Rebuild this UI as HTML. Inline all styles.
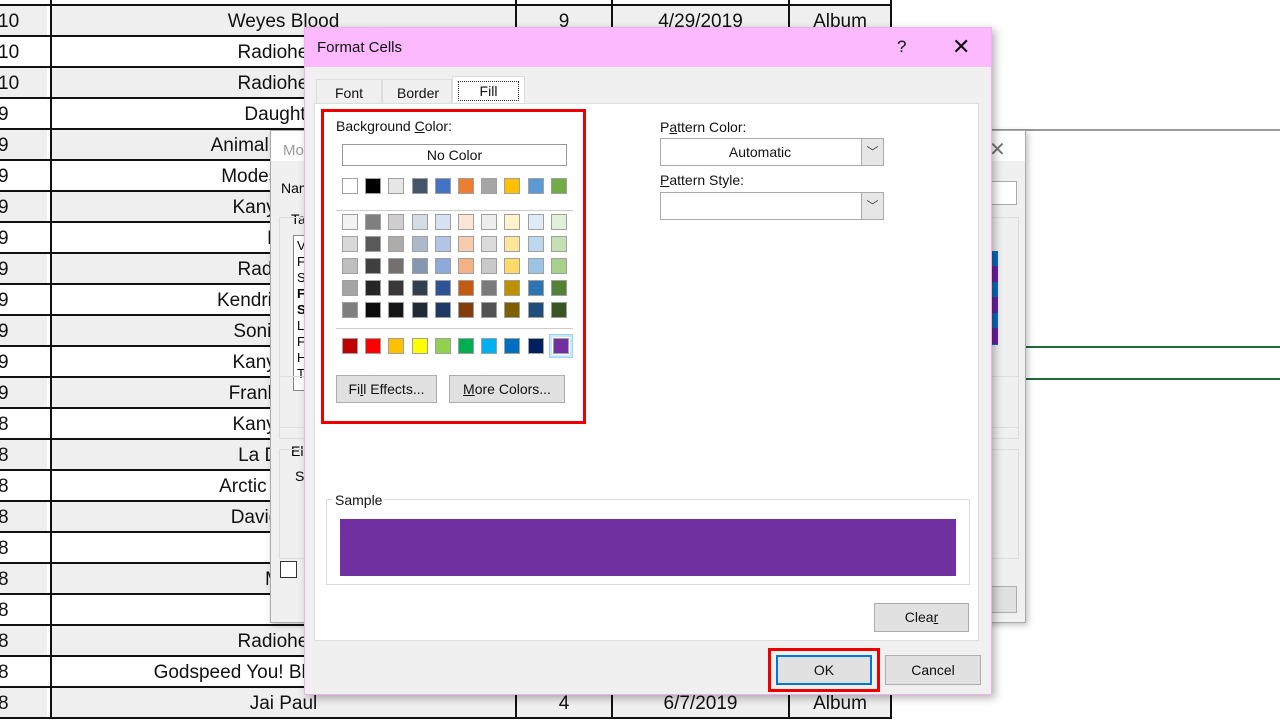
<!DOCTYPE html>
<html><head><meta charset="utf-8"><style>
*{margin:0;padding:0;box-sizing:border-box}
body{width:1280px;height:720px;overflow:hidden;background:#fff;position:relative;font-family:"Liberation Sans",sans-serif}
.a{position:absolute}
.row{position:absolute;left:0;width:892px;height:31px;border-bottom:2px solid #111;font-size:19px;color:#111}
.row div{position:absolute;top:0;height:29px;line-height:31px;text-align:center}
.c0{left:0;width:49px;text-align:left!important;left:-2px!important}
.c1{left:50px;width:465px;border-left:2px solid #111}
.c2{left:515px;width:96px;border-left:2px solid #111}
.c3{left:611px;width:177px;border-left:2px solid #111}
.c4{left:788px;width:104px;border-left:2px solid #111;border-right:2px solid #111}
.g{background:#efefef}
.sw{position:absolute;width:16px;height:16px;border:1px solid #a0a0a0;outline:1px solid #fff}
.t{font-size:14px;color:#111}
.btn{position:absolute;background:#e1e1e1;border:1px solid #adadad;font-size:14px;text-align:center;color:#111}
</style></head><body>
<div class="row" style="top:-25px"><div class="c0"></div><div class="c1"></div><div class="c2"></div><div class="c3"></div><div class="c4"></div></div>
<div id="rows"></div>
<div class="a" style="left:892px;top:129px;width:388px;height:2px;background:#999"></div>
<div class="a" style="left:1025px;top:346px;width:255px;height:2px;background:#1e6b3e"></div>
<div class="a" style="left:1025px;top:378px;width:255px;height:2px;background:#1e6b3e"></div>

<!-- back dialog -->
<div class="a" style="left:270px;top:130px;width:756px;height:493px;background:#f0f0f0;border:1px solid #aaa;box-shadow:2px 2px 6px rgba(0,0,0,.25)">
 <div class="a" style="left:0;top:0;width:754px;height:30px;background:#fff"></div>
 <div class="a" style="left:12px;top:11px;font-size:15px;color:#999">Mo</div>
 <div class="a" style="left:718px;top:6px;font-size:20px;color:#777">✕</div>
 <div class="a" style="left:10px;top:49px;font-size:14px">Nam</div>
 <div class="a" style="left:20px;top:80px;font-size:14px">Ta</div>
 <div class="a" style="left:8px;top:86px;width:740px;height:222px;border:1px solid #ddd"></div>
 <div class="a" style="left:22px;top:104px;width:100px;height:156px;border:1px solid #888;background:#fff;font-size:13px;line-height:16px;padding:2px 3px">V<br>F<br>S<br><b>F</b><br><b>S</b><br>L<br>F<br>H<br>T</div>
 <div class="a" style="left:700px;top:50px;width:46px;height:24px;background:#fff;border:1px solid #aaa"></div>
 <div class="a" style="left:700px;top:120px;width:27px;height:94px;background:repeating-linear-gradient(#0b6cb8 0 15px,#6a22a0 15px 31px)"></div>
 <div class="a" style="left:8px;top:245px;width:740px;height:52px;border:1px solid #ddd"></div>
 <div class="a" style="left:20px;top:312px;font-size:14px">El</div>
 <div class="a" style="left:8px;top:318px;width:740px;height:110px;border:1px solid #ddd"></div>
 <div class="a" style="left:24px;top:337px;font-size:14px">Sl</div>
 <div class="a" style="left:9px;top:430px;width:17px;height:17px;border:1px solid #333;background:#fff"></div>
 <div class="a" style="left:700px;top:455px;width:46px;height:27px;background:#e1e1e1;border:1px solid #adadad"></div>
</div>

<!-- Format Cells -->
<div class="a" style="left:304px;top:27px;width:688px;height:668px;background:#f0f0f0;border:1px solid #f0b0f0;box-shadow:3px 3px 8px rgba(0,0,0,.3)">
 <div class="a" style="left:0;top:0;width:686px;height:39px;background:#fdb9fd"></div>
 <div class="a" style="left:12px;top:11px;font-size:15px;color:#111">Format Cells</div>
 <div class="a" style="left:592px;top:9px;font-size:17px;color:#111">?</div>
 <div class="a" style="left:647px;top:6px;font-size:22px;color:#111">✕</div>
 <!-- tabs -->
 <div class="a" style="left:11px;top:51px;width:66px;height:24px;border:1px solid #ddd;border-bottom:none;background:#f0f0f0"></div>
 <div class="a t" style="left:30px;top:57px">Font</div>
 <div class="a" style="left:77px;top:51px;width:70px;height:24px;border:1px solid #ddd;border-bottom:none;background:#f0f0f0"></div>
 <div class="a t" style="left:92px;top:57px">Border</div>
 <div class="a" style="left:147px;top:48px;width:73px;height:28px;border:1px solid #ddd;border-bottom:none;background:#fff"></div>
 <div class="a t" style="left:153px;top:53px;width:61px;height:20px;border:1px dotted #333;text-align:center;line-height:18px">Fill</div>
 <div class="a" style="left:9px;top:75px;width:665px;height:538px;background:#fff;border:1px solid #ddd"></div>
 <div class="a" style="left:16px;top:81px;width:265px;height:315px;border:3px solid #e00"></div>
 <div class="a t" style="left:31px;top:90px">Background <u>C</u>olor:</div>
 <div class="a t" style="left:37px;top:116px;width:225px;height:22px;border:1px solid #999;text-align:center;line-height:20px">No Color</div>
 <div class="a" style="left:31px;top:182px;width:237px;height:1px;background:#ccc"></div>
 <div class="a" style="left:31px;top:300px;width:237px;height:1px;background:#ccc"></div>
 <div id="sw"></div>
 <div class="btn" style="left:31px;top:347px;width:101px;height:28px;line-height:26px"><span>Fi<u>l</u>l Effects...</span></div>
 <div class="btn" style="left:144px;top:347px;width:116px;height:28px;line-height:26px"><u>M</u>ore Colors...</div>
 <div class="a t" style="left:355px;top:91px">P<u>a</u>ttern Color:</div>
 <div class="a t" style="left:355px;top:110px;width:224px;height:28px;border:1px solid #aaa;line-height:26px;text-align:center;padding-right:24px;background:#fff">Automatic</div>
 <div class="a" style="left:556px;top:111px;width:22px;height:26px;background:#e6e6e6;border-left:1px solid #aaa;text-align:center;font-size:12px;line-height:26px;color:#444">﹀</div>
 <div class="a t" style="left:355px;top:144px"><u>P</u>attern Style:</div>
 <div class="a" style="left:355px;top:164px;width:224px;height:28px;border:1px solid #aaa;background:#fff"></div>
 <div class="a" style="left:556px;top:165px;width:22px;height:26px;background:#e6e6e6;border-left:1px solid #aaa;text-align:center;font-size:12px;line-height:26px;color:#444">﹀</div>
 <div class="a" style="left:21px;top:471px;width:644px;height:86px;border:1px solid #ddd"></div>
 <div class="a t" style="left:28px;top:464px;background:#fff;padding:0 2px">Sample</div>
 <div class="a" style="left:35px;top:491px;width:616px;height:57px;background:#7030a0"></div>
 <div class="btn" style="left:569px;top:575px;width:95px;height:29px;line-height:27px">Clea<u>r</u></div>
 <div class="a" style="left:463px;top:620px;width:112px;height:44px;border:3px solid #e00"></div>
 <div class="btn" style="left:471px;top:627px;width:96px;height:30px;line-height:26px;border:2px solid #0078d7">OK</div>
 <div class="btn" style="left:580px;top:627px;width:96px;height:30px;line-height:28px">Cancel</div>
</div>
<script>
var names=[["10","Weyes Blood","9","4/29/2019","Album"],["10","Radiohead"],["10","Radiohead"],["9","Daughter"],["9","Animal Collective"],["9","Modest Mouse"],["9","Kanye West"],["9","Hail"],["9","Radiohead"],["9","Kendrick Lamar"],["9","Sonic Youth"],["9","Kanye West"],["9","Frank Ocean"],["8","Kanye West"],["8","La Dispute"],["8","Arctic Monkeys"],["8","David Bowie"],["8",""],["8","Men"],["8","M"],["8","Radiohead"],["8","Godspeed You! Black Emperor"],["8","Jai Paul","4","6/7/2019","Album"]];
var h="";names.forEach(function(r,i){var g=i%2==0?" g":"";h+='<div class="row" style="top:'+(6+i*31)+'px"><div class="c0'+g+'">'+r[0]+'</div><div class="c1'+g+'">'+r[1]+'</div><div class="c2'+g+'">'+(r[2]||"")+'</div><div class="c3'+g+'">'+(r[3]||"")+'</div><div class="c4'+g+'">'+(r[4]||"")+'</div></div>'});
document.getElementById("rows").innerHTML=h;
var rows=[
["#ffffff","#000000","#e7e6e6","#44546a","#4472c4","#ed7d31","#a5a5a5","#ffc000","#5b9bd5","#70ad47"],
["#f2f2f2","#7f7f7f","#d0cece","#d6dce4","#d9e2f3","#fbe5d5","#ededed","#fff2cc","#deebf6","#e2efd9"],
["#d8d8d8","#595959","#aeabab","#adb9ca","#b4c6e7","#f7cbac","#dbdbdb","#fee599","#bdd7ee","#c5e0b3"],
["#bfbfbf","#3f3f3f","#757070","#8496b0","#8eaadb","#f4b183","#c9c9c9","#ffd965","#9cc3e5","#a8d08d"],
["#a5a5a5","#262626","#3a3838","#323f4f","#2f5496","#c55a11","#7b7b7b","#bf9000","#2e75b5","#538135"],
["#7f7f7f","#0c0c0c","#171616","#222a35","#1f3864","#833c0b","#525252","#7f6000","#1e4e79","#375623"],
["#c00000","#ff0000","#ffc000","#ffff00","#92d050","#00b050","#00b0f0","#0070c0","#002060","#7030a0"]];
var ys=[150,186,208,230,252,274,310];var s="";
rows.forEach(function(r,j){r.forEach(function(c,i){s+='<div class="sw" style="left:'+(37+i*23.2)+'px;top:'+ys[j]+'px;background:'+c+'"></div>'})});
s+='<div class="a" style="left:244px;top:306px;width:24px;height:24px;border:1px solid #99d1ff;background:#cce8ff"></div><div class="sw" style="left:248px;top:310px;background:#7030a0"></div>';
document.getElementById("sw").innerHTML=s;
</script>
</body></html>
